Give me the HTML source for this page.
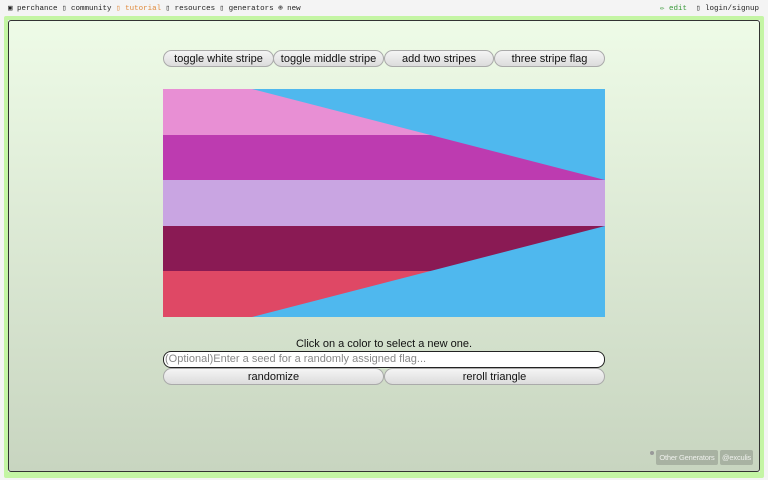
<!DOCTYPE html>
<html><head><style>
body{margin:0;width:768px;height:480px;background:#f4f4f4;font-family:"Liberation Sans",sans-serif;position:relative;overflow:hidden}
.nav{position:absolute;top:3px;left:8px;font:7.5px "Liberation Mono",monospace;color:#222;white-space:pre}
.nav .t{color:#e08a3a}
.navr{position:absolute;top:3px;right:9px;font:7.5px "Liberation Mono",monospace;color:#222;white-space:pre}
.navr .e{color:#3a9a3a}
.frame{position:absolute;left:4px;top:16px;width:752px;height:452px;border:4px solid #c4f5a4;border-bottom-width:6px;border-radius:2px}
.inner{position:absolute;left:0;top:0;right:0;bottom:0;border:1px solid #333;border-radius:3px;background:linear-gradient(#eefbe7,#c8d5c0)}
.btn{position:absolute;height:17px;border:1px solid #aaa;border-radius:9px;background:linear-gradient(#f4f4f4,#dcdcdc);font-size:11px;color:#111;text-align:center;line-height:17px;box-sizing:border-box}
.inp{position:absolute;left:163px;top:351px;width:442px;height:17px;box-sizing:border-box;border:1px solid #222;border-radius:8px;background:#fff;font-size:11px;color:#888;line-height:15px;padding-left:1px}
.lbl{position:absolute;left:163px;width:442px;top:338px;text-align:center;font-size:11px;color:#111}
.ft{position:absolute;top:450px;height:15px;background:#a8b2a2;color:#eef0ec;font-size:7.5px;line-height:15px;padding:0 1px;border-radius:2px;box-sizing:border-box;text-align:center;white-space:nowrap;overflow:hidden;letter-spacing:-0.2px}
</style></head><body>
<div class="nav">▣ perchance ▯ community <span class="t">▯ tutorial</span> ▯ resources ▯ generators ⊕ new</div>
<div class="navr"><span class="e">✏ edit</span>  ▯ login/signup</div>
<div class="frame"><div class="inner"></div></div>
<div class="btn" style="left:163px;top:50px;width:111px">toggle white stripe</div>
<div class="btn" style="left:273px;top:50px;width:111px">toggle middle stripe</div>
<div class="btn" style="left:384px;top:50px;width:110px">add two stripes</div>
<div class="btn" style="left:494px;top:50px;width:111px">three stripe flag</div>
<svg style="position:absolute;left:163px;top:89px" width="442" height="228" viewBox="0 0 442 228">
<rect y="0" width="442" height="46" fill="#e88fd4"/>
<rect y="46" width="442" height="45" fill="#bd3bb0"/>
<rect y="91" width="442" height="46" fill="#c9a5e2"/>
<rect y="137" width="442" height="45" fill="#8a1a54"/>
<rect y="182" width="442" height="46" fill="#df4865"/>
<polygon points="89,0 442,0 442,91 " fill="#4fb8ee"/>
<polygon points="442,137 442,228 89,228" fill="#4fb8ee"/>
</svg>
<div class="lbl">Click on a color to select a new one.</div>
<div class="inp">(Optional)Enter a seed for a randomly assigned flag...</div>
<div class="btn" style="left:163px;top:368px;width:221px">randomize</div>
<div class="btn" style="left:384px;top:368px;width:221px">reroll triangle</div>
<div style="position:absolute;left:650px;top:451px;width:4px;height:4px;border-radius:50%;background:#999"></div>
<div class="ft" style="left:656px;width:62px">Other Generators</div>
<div class="ft" style="left:720px;width:33px">@exculis</div>
</body></html>
